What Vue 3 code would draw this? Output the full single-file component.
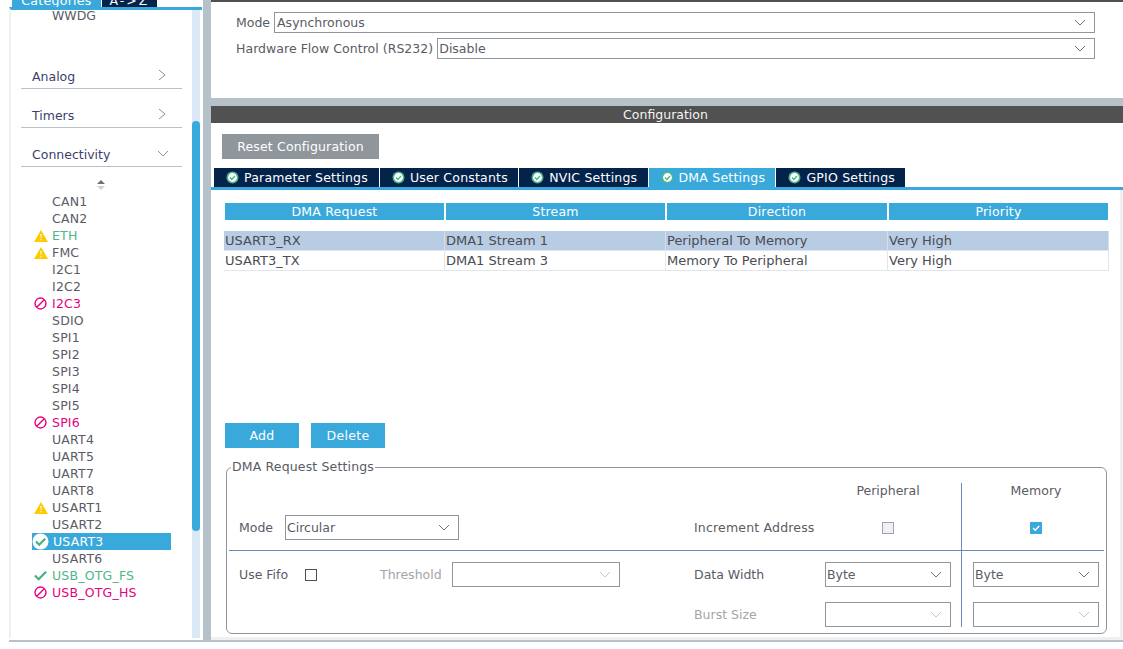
<script setup>
import { ref } from 'vue';

const tabs = [
  { label: 'Parameter Settings' },
  { label: 'User Constants' },
  { label: 'NVIC Settings' },
  { label: 'DMA Settings', active: true },
  { label: 'GPIO Settings' },
];

const columns = ['DMA Request', 'Stream', 'Direction', 'Priority'];

const rows = ref([
  { id: 1, cells: ['USART3_RX', 'DMA1 Stream 1', 'Peripheral To Memory', 'Very High'], selected: true },
  { id: 2, cells: ['USART3_TX', 'DMA1 Stream 3', 'Memory To Peripheral', 'Very High'] },
]);

// status: warn, block, ok, okRound
const peripherals = [
  { name: 'CAN1' },
  { name: 'CAN2' },
  { name: 'ETH', status: 'warn', color: 'green' },
  { name: 'FMC', status: 'warn' },
  { name: 'I2C1' },
  { name: 'I2C2' },
  { name: 'I2C3', status: 'block', color: 'pink' },
  { name: 'SDIO' },
  { name: 'SPI1' },
  { name: 'SPI2' },
  { name: 'SPI3' },
  { name: 'SPI4' },
  { name: 'SPI5' },
  { name: 'SPI6', status: 'block', color: 'pink' },
  { name: 'UART4' },
  { name: 'UART5' },
  { name: 'UART7' },
  { name: 'UART8' },
  { name: 'USART1', status: 'warn' },
  { name: 'USART2' },
  { name: 'USART3', status: 'okRound', selected: true },
  { name: 'USART6' },
  { name: 'USB_OTG_FS', status: 'ok', color: 'green' },
  { name: 'USB_OTG_HS', status: 'block', color: 'pink' },
];
</script>

<template>
  <div class="page">
    <div class="shell">
      <aside class="sidebar">
        <div class="side-tabs">
          <div class="side-tab on"><span>Categories</span></div>
          <div class="side-tab az"><span>A-&gt;Z</span></div>
        </div>
        <div class="side-body">
          <div class="side-list">
            <div class="wwdg">WWDG</div>
            <div class="cat first">
              <span>Analog</span>
              <svg width="10" height="12" viewBox="0 0 10 12"><path d="M2 1l6 5-6 5" fill="none" stroke="#8a8f96" stroke-width="1"/></svg>
            </div>
            <div class="cat">
              <span>Timers</span>
              <svg width="10" height="12" viewBox="0 0 10 12"><path d="M2 1l6 5-6 5" fill="none" stroke="#8a8f96" stroke-width="1"/></svg>
            </div>
            <div class="cat">
              <span>Connectivity</span>
              <svg class="down" width="12" height="8" viewBox="0 0 12 8"><path d="M1 1l5 5 5-5" fill="none" stroke="#8a8f96" stroke-width="1"/></svg>
            </div>
            <div class="sort">
              <svg width="10" height="11" viewBox="0 0 10 11">
                <path d="M5 0l4 4H1z" fill="#6e7175"/>
                <path d="M1 6h8L5 10z" fill="#cfd2d4"/>
              </svg>
            </div>
            <div
              v-for="p in peripherals"
              :key="p.name"
              class="ip"
              :class="[p.color, { selected: p.selected }]"
            >
              <span class="ip-icon">
                <svg v-if="p.status === 'warn'" width="14" height="12" viewBox="0 0 14 12">
                  <path d="M7 0l7 12H0z" fill="#fdcb00"/>
                  <path d="M6.4 4h1.2l-.2 4.2h-.8zM6.4 9h1.2v1.3H6.4z" fill="#fff"/>
                </svg>
                <svg v-else-if="p.status === 'block'" width="13" height="13" viewBox="0 0 14 14">
                  <circle cx="7" cy="7" r="5.9" fill="none" stroke="#e6007e" stroke-width="1.5"/>
                  <path d="M3 11l8-8" stroke="#e6007e" stroke-width="1.5"/>
                </svg>
                <svg v-else-if="p.status === 'ok'" width="13" height="11" viewBox="0 0 14 11">
                  <path d="M1 5.5l4 4 8-8" fill="none" stroke="#46b07f" stroke-width="2.4"/>
                </svg>
                <svg v-else-if="p.status === 'okRound'" class="round" width="17" height="17" viewBox="0 0 17 17">
                  <circle cx="8.5" cy="8.5" r="8" fill="#fff"/>
                  <path d="M4 8.5l3.2 3.2 6-6" fill="none" stroke="#46b07f" stroke-width="2.2"/>
                </svg>
              </span>
              <span class="ip-name">{{ p.name }}</span>
            </div>
          </div>
          <div class="side-scroll"><div class="side-thumb"></div></div>
        </div>
      </aside>

      <div class="divider"></div>

      <main class="main">
        <section class="mode-panel">
          <div class="form-row">
            <label>Mode</label>
            <div class="select wide">
              <span>Asynchronous</span>
              <svg class="chev" width="12" height="7" viewBox="0 0 12 7"><path d="M1 1l5 5 5-5" fill="none" stroke="#70757a"/></svg>
            </div>
          </div>
          <div class="form-row">
            <label>Hardware Flow Control (RS232)</label>
            <div class="select wide">
              <span>Disable</span>
              <svg class="chev" width="12" height="7" viewBox="0 0 12 7"><path d="M1 1l5 5 5-5" fill="none" stroke="#70757a"/></svg>
            </div>
          </div>
        </section>

        <section class="config">
          <header class="config-title">Configuration</header>
          <div class="config-body">
            <button class="reset">Reset Configuration</button>

            <nav class="tabs">
              <div v-for="t in tabs" :key="t.label" class="tab" :class="{ active: t.active }">
                <svg width="13" height="13" viewBox="0 0 13 13">
                  <circle cx="6.5" cy="6.5" r="6" fill="#4fb58a"/>
                  <circle cx="6.5" cy="6.5" r="4.4" fill="#fff"/>
                  <path d="M4 6.6l1.8 1.8L9 5" fill="none" stroke="#4fb58a" stroke-width="1.4"/>
                </svg>
                <span>{{ t.label }}</span>
              </div>
            </nav>

            <div class="tab-content">
              <div class="dma-head">
                <div v-for="c in columns" :key="c">{{ c }}</div>
              </div>
              <div class="dma-rows">
                <div v-for="r in rows" :key="r.id" class="dma-row" :class="{ selected: r.selected }">
                  <div v-for="cell in r.cells" :key="cell">{{ cell }}</div>
                </div>
              </div>

              <div class="actions">
                <button class="blue-btn">Add</button>
                <button class="blue-btn">Delete</button>
              </div>

              <fieldset class="req">
                <legend>DMA Request Settings</legend>
                <div class="req-grid">
                  <div class="vline"></div>
                  <div class="hline"></div>

                  <div class="head c-per">Peripheral</div>
                  <div class="head c-mem">Memory</div>

                  <div class="left r-mode">
                    <span class="lbl mode-lbl">Mode</span>
                    <div class="select mode-sel">
                      <span>Circular</span>
                      <svg class="chev" width="12" height="7" viewBox="0 0 12 7"><path d="M1 1l5 5 5-5" fill="none" stroke="#70757a"/></svg>
                    </div>
                  </div>
                  <div class="lbl inc r-mode">Increment Address</div>
                  <div class="check-cell c-per r-mode"><span class="check off"></span></div>
                  <div class="check-cell c-mem r-mode">
                    <span class="check on">
                      <svg width="12" height="12" viewBox="0 0 12 12"><path d="M3 6l2.2 2.2L9.2 4" fill="none" stroke="#fff" stroke-width="1.4"/></svg>
                    </span>
                  </div>

                  <div class="left r-width">
                    <span class="lbl fifo-lbl">Use Fifo</span>
                    <span class="check plain"></span>
                    <span class="lbl muted thr-lbl">Threshold</span>
                    <div class="select thr-sel">
                      <svg class="chev faded" width="12" height="7" viewBox="0 0 12 7"><path d="M1 1l5 5 5-5" fill="none" stroke="#70757a"/></svg>
                    </div>
                  </div>
                  <div class="lbl inc r-width">Data Width</div>
                  <div class="select c-per r-width">
                    <span>Byte</span>
                    <svg class="chev" width="12" height="7" viewBox="0 0 12 7"><path d="M1 1l5 5 5-5" fill="none" stroke="#70757a"/></svg>
                  </div>
                  <div class="select c-mem r-width">
                    <span>Byte</span>
                    <svg class="chev" width="12" height="7" viewBox="0 0 12 7"><path d="M1 1l5 5 5-5" fill="none" stroke="#70757a"/></svg>
                  </div>

                  <div class="lbl inc muted r-burst">Burst Size</div>
                  <div class="select c-per r-burst">
                    <svg class="chev faded" width="12" height="7" viewBox="0 0 12 7"><path d="M1 1l5 5 5-5" fill="none" stroke="#70757a"/></svg>
                  </div>
                  <div class="select c-mem r-burst">
                    <svg class="chev faded" width="12" height="7" viewBox="0 0 12 7"><path d="M1 1l5 5 5-5" fill="none" stroke="#70757a"/></svg>
                  </div>
                </div>
              </fieldset>
            </div>
          </div>
        </section>
      </main>
    </div>
  </div>
</template>

<style scoped>
.page {
  height: 649px;
  padding-left: 9px;
  box-sizing: border-box;
  background: #fff;
  font-family: "DejaVu Sans", sans-serif;
  font-size: 12.5px;
  color: #5a5b64;
  overflow: hidden;
}

.shell {
  display: flex;
  height: 642px;
  border-bottom: 2px solid #b6c2c9;
  box-sizing: border-box;
}

/* left bar */
.sidebar {
  width: 193px;
  display: flex;
  flex-direction: column;
  flex: none;
}

.side-tabs {
  display: flex;
  height: 7px;
  padding-left: 3px;
  gap: 1px;
  overflow: hidden;
}

.side-tab {
  width: 55px;
  background: #03234b;
  color: #fff;
  text-align: center;
  line-height: 7px;
}

.side-tab span {
  position: relative;
  top: -3px;
}

.side-tab.az {
  letter-spacing: 2px;
}

.side-tab.on {
  width: 89px;
  background: #39a9dc;
  letter-spacing: 0.3px;
}

.side-body {
  flex: 1;
  display: flex;
  min-height: 0;
  border-top: 3px solid #39a9dc;
  border-left: 2px solid #eef0f1;
  margin-bottom: 2px;
}

.side-list {
  width: 181px;
  flex: none;
}

.wwdg {
  padding-left: 41px;
  line-height: 12px;
}

.cat {
  height: 39px;
  margin: 0 10px;
  box-sizing: border-box;
  border-bottom: 1px solid #b6c2c9;
  display: flex;
  align-items: flex-end;
  justify-content: space-between;
  padding: 0 15px 4px 11px;
  color: #3c3f6e;
  font-size: 12.5px;
}

.cat.first {
  margin-top: 28px;
}

.cat svg {
  margin-bottom: 3px;
}

.cat svg.down {
  margin-bottom: 4px;
  margin-right: -2px;
}

.sort {
  height: 26px;
  box-sizing: border-box;
  padding: 13px 0 0 85px;
}

.sort svg {
  display: block;
}

.ip {
  height: 17px;
  margin-left: 21px;
  width: 139px;
  display: flex;
  align-items: center;
  line-height: 17px;
  letter-spacing: 0.2px;
}

.ip-icon {
  width: 20px;
  box-sizing: border-box;
  flex: none;
  display: flex;
  justify-content: flex-start;
  padding-left: 2px;
}

.ip-icon svg.round {
  margin-left: -2px;
}

.ip.green .ip-name { color: #4fb58a; }
.ip.pink .ip-name { color: #e6007e; }

.ip.selected {
  background: #39a9dc;
  color: #fff;
}

.ip.selected .ip-name {
  padding-left: 1px;
}

.side-scroll {
  width: 8px;
  background: #dbe8f5;
  flex: none;
}

.side-thumb {
  margin-top: 111px;
  height: 410px;
  background: #39a9dc;
  border-radius: 4px;
}

.divider {
  width: 8px;
  margin-left: 1px;
  background: #b6c2c9;
  flex: none;
}

/* right side */
.main {
  flex: 1;
  min-width: 0;
  display: flex;
  flex-direction: column;
  border-top: 2px solid #505150;
}

.mode-panel {
  height: 104px;
  flex: none;
  box-sizing: border-box;
  padding: 10px 28px 0 25px;
  border-bottom: 8px solid #b6c2c9;
  display: flex;
  flex-direction: column;
  gap: 5px;
}

.form-row {
  display: flex;
  align-items: center;
  gap: 4px;
}

.form-row:first-child .select {
  padding-left: 2px;
}

.form-row:nth-child(2) label {
  letter-spacing: 0.035px;
}

.select {
  height: 21px;
  box-sizing: border-box;
  border: 1px solid #8f969c;
  display: flex;
  align-items: center;
  justify-content: space-between;
  padding: 0 8px 0 1px;
  background: #fff;
  min-width: 0;
}

.select.wide {
  flex: 1;
}

.chev {
  margin-left: auto;
  flex: none;
}

.chev.faded {
  opacity: 0.4;
}

.config {
  flex: 1;
  display: flex;
  flex-direction: column;
  min-height: 0;
}

.config-title {
  height: 17px;
  line-height: 17px;
  background: #505150;
  color: #f4f4f4;
  text-align: center;
  padding-right: 3px;
  flex: none;
}

.config-body {
  flex: 1;
  padding-top: 11px;
  display: flex;
  flex-direction: column;
  min-height: 0;
}

.reset {
  width: 157px;
  height: 25px;
  margin-left: 11px;
  border: 0;
  background: #8f969c;
  color: #fff;
  font: inherit;
  letter-spacing: 0.15px;
  padding: 0;
  flex: none;
}

.tabs {
  margin-top: 9px;
  display: flex;
  padding-left: 3px;
  gap: 1px;
  height: 22px;
  flex: none;
  box-sizing: border-box;
  border-bottom: 3px solid #39a9dc;
}

.tab {
  height: 19px;
  background: #03234b;
  color: #fff;
  display: flex;
  align-items: center;
  gap: 5px;
  padding: 0 10.25px 0 12px;
  letter-spacing: 0.2px;
}

.tab:first-child {
  padding-right: 11px;
}

.tab.active {
  background: #39a9dc;
}

.tab-content {
  flex: 1;
  padding: 13px 12px 0 14px;
  border-right: 3px solid #eef0f1;
  border-bottom: 3px solid #eef0f1;
  min-height: 0;
}

.dma-head {
  display: grid;
  grid-template-columns: 219px 219px 220px 219px;
  gap: 2px;
  height: 17px;
  width: 883px;
}

.dma-head div {
  background: #39a9dc;
  color: #fff;
  text-align: center;
  line-height: 17px;
  font-size: 12.5px;
  letter-spacing: 0.2px;
}

.dma-rows {
  margin-top: 11px;
  width: 885px;
  margin-left: -1px;
}

.dma-row {
  display: grid;
  grid-template-columns: 221px 221px 222px 221px;
  height: 20px;
  line-height: 19px;
  border-bottom: 1px solid #e2e6ea;
  box-sizing: border-box;
  color: #4a4b53;
  font-size: 13px;
}

.dma-row > div {
  padding-left: 1px;
  border-right: 1px solid #e2e6ea;
}

.dma-row.selected {
  background: #b8cde4;
}

.dma-row.selected > div {
  border-right-color: #d5dfeb;
}

.actions {
  margin-top: 152px;
  display: flex;
  gap: 12px;
}

.blue-btn {
  width: 74px;
  height: 25px;
  border: 0;
  padding: 0;
  background: #39a9dc;
  color: #fff;
  font: inherit;
  letter-spacing: 0.3px;
}

.req {
  margin: 11px 0 0 1px;
  width: 881px;
  height: 175px;
  box-sizing: border-box;
  border: 1px solid #8f969c;
  border-radius: 6px;
  padding: 0 2px;
  min-inline-size: 0;
}

.req legend {
  padding: 0 1px;
  margin-left: 2px;
  line-height: 16px;
  color: #5a5b63;
  letter-spacing: 0.15px;
}

.req-grid {
  position: relative;
  display: grid;
  grid-template-columns: 465px 131px 126px 22px 126px 5px;
  grid-template-rows: 32px 25px 22px 25px 40px;
  margin-top: 8px;
}

.vline {
  grid-column: 4;
  grid-row: 1 / 6;
  justify-self: center;
  width: 1px;
  background: #6f86c0;
  border-right: 1px solid #fff;
}

.hline {
  grid-column: 1 / 7;
  grid-row: 3;
  align-self: start;
  margin-top: 10px;
  height: 1px;
  background: #6f86c0;
}

.head {
  grid-row: 1;
  text-align: center;
  line-height: 16px;
}

.c-per { grid-column: 3; }
.c-mem { grid-column: 5; }
.r-mode { grid-row: 2; }
.r-width { grid-row: 4; }

.r-burst {
  grid-row: 5;
  align-self: end;
}

.select.c-per,
.select.c-mem {
  height: 25px;
}

.left {
  grid-column: 1;
  display: flex;
  align-items: center;
}

.lbl {
  white-space: nowrap;
}

.muted {
  color: #a3a5a9;
}

.inc {
  grid-column: 1 / 3;
  padding-left: 465px;
  align-self: center;
}

.inc.r-mode {
  letter-spacing: 0.18px;
}

.inc.r-burst {
  align-self: end;
  line-height: 25px;
}

.mode-lbl {
  margin-left: 10px;
  width: 46px;
}

.mode-sel {
  width: 174px;
  height: 25px;
}

.fifo-lbl {
  margin-left: 10px;
  width: 66px;
}

.thr-lbl {
  margin-left: 63px;
  width: 72px;
}

.thr-sel {
  width: 168px;
  height: 25px;
}

.check-cell {
  display: flex;
  align-items: center;
  justify-content: center;
}

.check {
  width: 12px;
  height: 12px;
  box-sizing: border-box;
  display: block;
  flex: none;
}

.check.off {
  background: #eef0f3;
  border: 1px solid #a0a5aa;
}

.check.on {
  background: #39a9dc;
}

.check.on svg {
  display: block;
}

.check.plain {
  border: 1px solid #505058;
}
</style>

<style>
html, body {
  margin: 0;
  background: #fff;
}
</style>
